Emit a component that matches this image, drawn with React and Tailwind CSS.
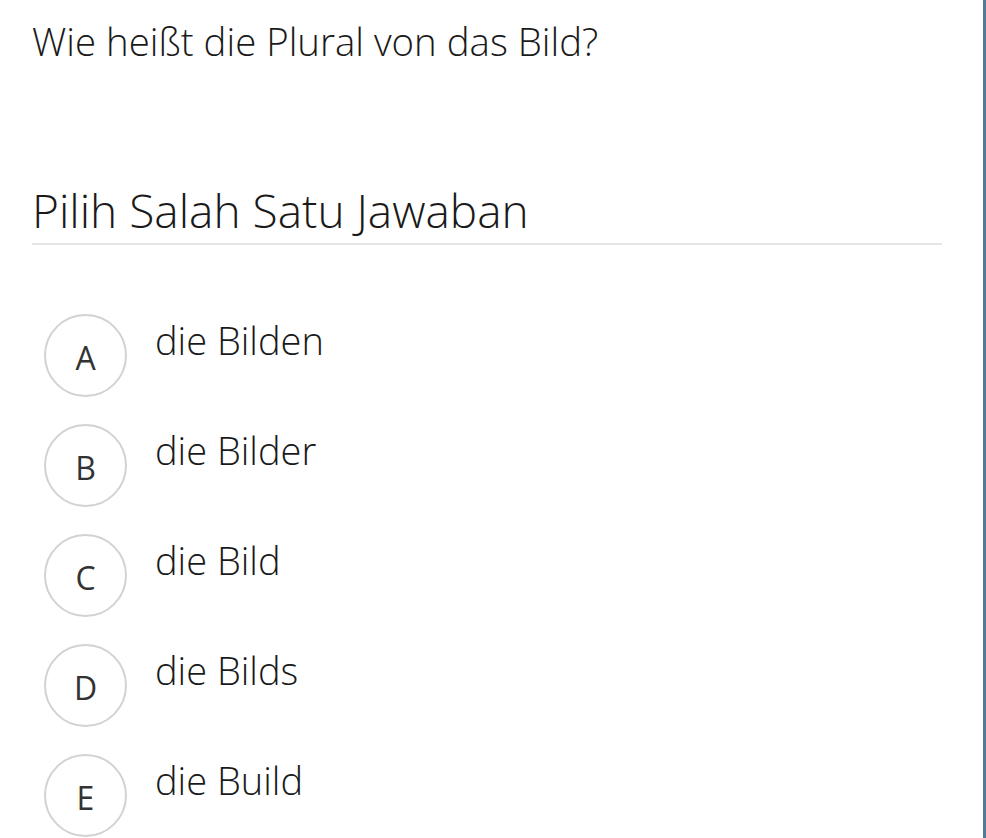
export default function App() {
  const options = [
    ["A", "die Bilden"],
    ["B", "die Bilder"],
    ["C", "die Bild"],
    ["D", "die Bilds"],
    ["E", "die Build"],
  ];
  return (
    <div className="min-h-screen w-full bg-white border-r-[3px] border-[#4d7b99] font-['Open_Sans',sans-serif] text-[#1a1a1a] overflow-hidden">
      <div className="pl-8 pr-[41px]">
        <h1 className="pt-[22px] text-[38.4px] font-light leading-none whitespace-nowrap">
          Wie heißt die Plural von das Bild?
        </h1>
        <div className="mt-[127px] pb-[10px] border-b-2 border-[#e5e5e5]">
          <h2 className="text-[46px] font-light leading-none whitespace-nowrap">
            Pilih Salah Satu Jawaban
          </h2>
        </div>
        <div className="mt-[69px] flex flex-col gap-[27px] pl-[12px]">
          {options.map(([k, t]) => (
            <div key={k} className="flex items-start">
              <div className="w-[83px] h-[83px] shrink-0 rounded-full border-2 border-[#d2d2d2] flex items-center justify-center text-[32px] font-normal text-[#333] pt-[4px]">
                {k}
              </div>
              <div className="ml-[28px] mt-[7px] text-[38px] font-light leading-none whitespace-nowrap">
                {t}
              </div>
            </div>
          ))}
        </div>
      </div>
    </div>
  );
}
